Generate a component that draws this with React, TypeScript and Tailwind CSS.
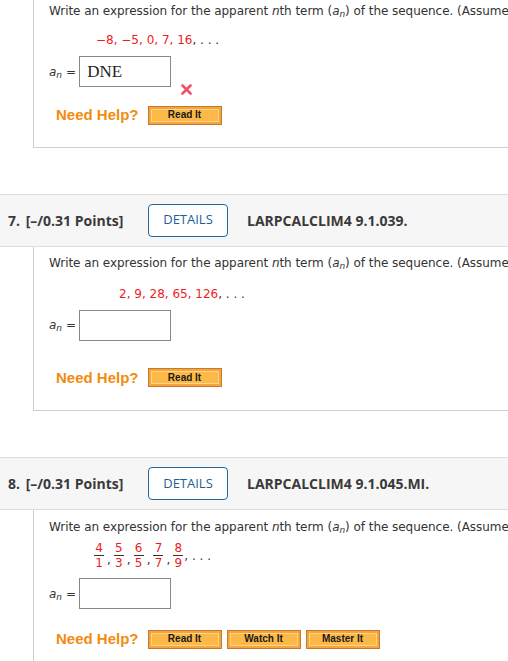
import { ReactNode } from 'react';

const body = "font-['Verdana','DejaVu_Sans',sans-serif]";
const head = "font-['Open_Sans','Noto_Sans',sans-serif]";

const An = () => (
  <span className={`${body} text-[12px] text-[#333]`}>
    <i>a</i>
    <sub className="text-[9px]">
      <i>n</i>
    </sub>
  </span>
);

const Prompt = () => (
  <p className={`${body} text-[12px] leading-[16px] tracking-[-0.05px] whitespace-nowrap text-[#333]`}>
    Write an expression for the apparent <i>n</i>th term (<An />) of the sequence. (Assume
    the first term is <i>a</i><sub>1</sub>.)
  </p>
);

const WrongIcon = () => (
  <svg width="11" height="11" viewBox="0 0 11 11">
    <path d="M1.5 1.5 L9.5 9.5 M9.5 1.5 L1.5 9.5" stroke="#f2506a" strokeWidth="2.6" strokeLinecap="round" />
  </svg>
);

const AnswerRow = ({ value, wrong = false }: { value?: string; wrong?: boolean }) => (
  <div className="flex items-end">
    <div className="flex items-center">
      <An />
      <span className={`${body} ml-[4px] text-[12px] text-[#333]`}>=</span>
      <div className="ml-[3px] flex h-[31px] w-[92px] items-center border border-[#888] bg-white px-[7px] font-['Liberation_Serif',serif] text-[17px] text-[#222]">
        {value}
      </div>
    </div>
    {wrong && (
      <span className="mb-[-8px] ml-[10px]">
        <WrongIcon />
      </span>
    )}
  </div>
);

const HelpButton = ({ label }: { label: string }) => (
  <button className="h-[19px] w-[74px] border border-[#c47a30] bg-[#f7a53a] p-[2px]">
    <span className="flex h-full w-full items-center justify-center border border-[#ffd58a] bg-[#fdb947] font-['Liberation_Sans',Arial,sans-serif] text-[10px] font-bold leading-none text-[#1a1a1a]">
      {label}
    </span>
  </button>
);

const NeedHelp = ({ buttons }: { buttons: string[] }) => (
  <div className="ml-[7px] flex items-center gap-[9px]">
    <span className="font-['Liberation_Sans',Arial,sans-serif] text-[15px] font-bold text-[#f28c0f]">
      Need Help?
    </span>
    <div className="flex gap-[5px]">
      {buttons.map((b) => (
        <HelpButton key={b} label={b} />
      ))}
    </div>
  </div>
);

const Header = ({ num, code }: { num: number; code: string }) => (
  <div className={`${head} flex h-[53px] items-center border-y border-[#dcdcdc] bg-[#f6f6f6] pl-[8px] text-[#3a3a3a]`}>
    <span className="w-[140px] text-[14px] font-bold">
      {num}. <span className="ml-[2px]">[–/0.31 Points]</span>
    </span>
    <span className="flex h-[33px] w-[80px] items-center justify-center rounded-[4px] border border-[#23679a] bg-white text-[13px] text-[#1f5f92]">
      DETAILS
    </span>
    <span className="ml-[19px] text-[14px] font-bold">{code}</span>
  </div>
);

const Panel = ({ children, last = false }: { children: ReactNode; last?: boolean }) => (
  <div className={`ml-[33px] border-l border-[#cfcfcf] pl-[15px] ${last ? '' : 'border-b'}`}>{children}</div>
);

const Seq = ({ children, indent }: { children: ReactNode; indent: string }) => (
  <div className={`${body} ${indent} flex items-center text-[12px] leading-[16px] whitespace-pre text-[#ee1c1c]`}>
    {children}
    <span className="text-[#333]">, . . .</span>
  </div>
);

const Frac = ({ n, d }: { n: number; d: number }) => (
  <span className="inline-flex flex-col items-center leading-[12px]">
    <span>{n}</span>
    <span className="my-[1px] h-px w-[10px] bg-[#333]" />
    <span>{d}</span>
  </span>
);

const Comma = () => <span className="mx-[3px] mt-[9px] text-[#333]">,</span>;

export default function App() {
  return (
    <div className="h-[661px] w-[508px] overflow-hidden bg-white">
      <Panel>
        <div className="pt-[3px]">
          <Prompt />
        </div>
        <div className="mt-[13px]">
          <Seq indent="ml-[47px]">
            <span>−8, −5, 0, 7, 16</span>
          </Seq>
        </div>
        <div className="mt-[8px]">
          <AnswerRow value="DNE" wrong />
        </div>
        <div className="mt-[17px] pb-[20px]">
          <NeedHelp buttons={['Read It']} />
        </div>
      </Panel>

      <div className="h-[46px]" />
      <Header num={7} code="LARPCALCLIM4 9.1.039." />
      <Panel>
        <div className="pt-[8px]">
          <Prompt />
        </div>
        <div className="mt-[15px]">
          <Seq indent="ml-[70px]">
            <span>2, 9, 28, 65, 126</span>
          </Seq>
        </div>
        <div className="mt-[8px]">
          <AnswerRow />
        </div>
        <div className="mt-[26px] pb-[21px]">
          <NeedHelp buttons={['Read It']} />
        </div>
      </Panel>

      <div className="h-[46px]" />
      <Header num={8} code="LARPCALCLIM4 9.1.045.MI." />
      <Panel last>
        <div className="pt-[9px]">
          <Prompt />
        </div>
        <div className="mt-[7px]">
          <Seq indent="ml-[45px]">
            <Frac n={4} d={1} />
            <Comma />
            <Frac n={5} d={3} />
            <Comma />
            <Frac n={6} d={5} />
            <Comma />
            <Frac n={7} d={7} />
            <Comma />
            <Frac n={8} d={9} />
            <span className="w-[1px]" />
          </Seq>
        </div>
        <div className="mt-[9px]">
          <AnswerRow />
        </div>
        <div className="mt-[19px] pb-[20px]">
          <NeedHelp buttons={['Read It', 'Watch It', 'Master It']} />
        </div>
      </Panel>
    </div>
  );
}
